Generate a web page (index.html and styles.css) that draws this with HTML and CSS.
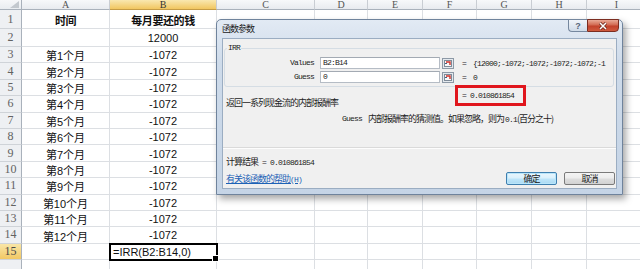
FILE: index.html
```html
<!DOCTYPE html>
<html lang="zh-CN">
<head>
<meta charset="utf-8">
<title>IRR</title>
<link rel="stylesheet" href="styles.css">
</head>
<body>
<div class="sheet">
  <div class="corner"><svg width="9" height="7" viewBox="0 0 9 7"><path d="M9 0V7H0Z" fill="#c3c8ce"/></svg></div>
  <div class="ch">A</div><div class="ch sel">B</div><div class="ch">C</div><div class="ch">D</div><div class="ch">E</div><div class="ch">F</div><div class="ch">G</div><div class="ch">H</div><div class="ch">I</div>

  <div class="rh">1</div><div class="c b">时间</div><div class="c b">每月要还的钱</div><div class="c"></div><div class="c"></div><div class="c"></div><div class="c"></div><div class="c"></div><div class="c"></div><div class="c"></div>
  <div class="rh">2</div><div class="c"></div><div class="c">12000</div><div class="c"></div><div class="c"></div><div class="c"></div><div class="c"></div><div class="c"></div><div class="c"></div><div class="c"></div>
  <div class="rh">3</div><div class="c">第1个月</div><div class="c">-1072</div><div class="c"></div><div class="c"></div><div class="c"></div><div class="c"></div><div class="c"></div><div class="c"></div><div class="c"></div>
  <div class="rh">4</div><div class="c">第2个月</div><div class="c">-1072</div><div class="c"></div><div class="c"></div><div class="c"></div><div class="c"></div><div class="c"></div><div class="c"></div><div class="c"></div>
  <div class="rh">5</div><div class="c">第3个月</div><div class="c">-1072</div><div class="c"></div><div class="c"></div><div class="c"></div><div class="c"></div><div class="c"></div><div class="c"></div><div class="c"></div>
  <div class="rh">6</div><div class="c">第4个月</div><div class="c">-1072</div><div class="c"></div><div class="c"></div><div class="c"></div><div class="c"></div><div class="c"></div><div class="c"></div><div class="c"></div>
  <div class="rh">7</div><div class="c">第5个月</div><div class="c">-1072</div><div class="c"></div><div class="c"></div><div class="c"></div><div class="c"></div><div class="c"></div><div class="c"></div><div class="c"></div>
  <div class="rh">8</div><div class="c">第6个月</div><div class="c">-1072</div><div class="c"></div><div class="c"></div><div class="c"></div><div class="c"></div><div class="c"></div><div class="c"></div><div class="c"></div>
  <div class="rh">9</div><div class="c">第7个月</div><div class="c">-1072</div><div class="c"></div><div class="c"></div><div class="c"></div><div class="c"></div><div class="c"></div><div class="c"></div><div class="c"></div>
  <div class="rh">10</div><div class="c">第8个月</div><div class="c">-1072</div><div class="c"></div><div class="c"></div><div class="c"></div><div class="c"></div><div class="c"></div><div class="c"></div><div class="c"></div>
  <div class="rh">11</div><div class="c">第9个月</div><div class="c">-1072</div><div class="c"></div><div class="c"></div><div class="c"></div><div class="c"></div><div class="c"></div><div class="c"></div><div class="c"></div>
  <div class="rh">12</div><div class="c">第10个月</div><div class="c">-1072</div><div class="c"></div><div class="c"></div><div class="c"></div><div class="c"></div><div class="c"></div><div class="c"></div><div class="c"></div>
  <div class="rh">13</div><div class="c">第11个月</div><div class="c">-1072</div><div class="c"></div><div class="c"></div><div class="c"></div><div class="c"></div><div class="c"></div><div class="c"></div><div class="c"></div>
  <div class="rh">14</div><div class="c">第12个月</div><div class="c">-1072</div><div class="c"></div><div class="c"></div><div class="c"></div><div class="c"></div><div class="c"></div><div class="c"></div><div class="c"></div>
  <div class="rh sel">15</div><div class="c"></div><div class="c active">=IRR(B2:B14,0)</div><div class="c"></div><div class="c"></div><div class="c"></div><div class="c"></div><div class="c"></div><div class="c"></div><div class="c"></div>
  <div class="rh"></div><div class="c"></div><div class="c"></div><div class="c"></div><div class="c"></div><div class="c"></div><div class="c"></div><div class="c"></div><div class="c"></div><div class="c"></div>
</div>

<div class="dlg">
  <div class="titlebar">
    <span class="title cjk">函数参数</span>
    <div class="caps">
      <div class="cap help">?</div>
      <div class="cap close"><svg width="10" height="8" viewBox="0 0 10 8"><path d="M2 1l6 6M8 1L2 7" stroke="#6a2418" stroke-width="3"/><path d="M2 1l6 6M8 1L2 7" stroke="#fff" stroke-width="1.5"/></svg></div>
    </div>
  </div>
  <div class="client">
    <div class="group">
      <div class="legend mono">IRR</div>
      <div class="arg">
        <span class="lbl mono">Values</span>
        <div class="inp mono">B2:B14</div>
        <span class="ref"><svg width="12" height="11" viewBox="0 0 12 11"><rect x="0.5" y="0.5" width="11" height="10" fill="#e4e9ee" stroke="#8d99a6"/><rect x="2.5" y="2.5" width="7" height="6" fill="#f8f8f8" stroke="#7f8b98"/><path d="M4 4h4v3" fill="none" stroke="#d2322a" stroke-width="1.4"/><path d="M3 5.5h2" stroke="#44607e"/></svg></span>
        <span class="eq mono">=</span>
        <span class="val mono">{12000;-1072;-1072;-1072;-1072;-1</span>
      </div>
      <div class="arg">
        <span class="lbl mono">Guess</span>
        <div class="inp mono">0</div>
        <span class="ref"><svg width="12" height="11" viewBox="0 0 12 11"><rect x="0.5" y="0.5" width="11" height="10" fill="#e4e9ee" stroke="#8d99a6"/><rect x="2.5" y="2.5" width="7" height="6" fill="#f8f8f8" stroke="#7f8b98"/><path d="M4 4h4v3" fill="none" stroke="#d2322a" stroke-width="1.4"/><path d="M3 5.5h2" stroke="#44607e"/></svg></span>
        <span class="eq mono">=</span>
        <span class="val mono">0</span>
      </div>
    </div>
    <div class="result"><span class="mark mono">= 0.010861854</span></div>
    <div class="desc cjk">返回一系列现金流的内部报酬率</div>
    <div class="argdesc"><span class="an mono">Guess</span><span class="cjk">内部报酬率的猜测值。如果忽略，则为 <span class="mono">0.1</span>(百分之十)</span></div>
    <div class="sep"></div>
    <div class="calc"><span class="cjk">计算结果</span><span class="mono"> = 0.010861854</span></div>
    <div class="footer">
      <a class="link" href="#"><span class="cjk">有关该函数的帮助</span><span class="mono">(H)</span></a>
      <div class="btns">
        <button class="btn def cjk">确定</button>
        <button class="btn cjk">取消</button>
      </div>
    </div>
  </div>
</div>
</body>
</html>
```

FILE: styles.css
```css
* { box-sizing: border-box; }
html, body { margin: 0; padding: 0; }
body {
  width: 640px;
  height: 269px;
  overflow: hidden;
  position: relative;
  background: #fff;
  font-family: "Liberation Sans", "Noto Sans CJK SC", sans-serif;
  color: #111;
}

/* ---------- spreadsheet ---------- */
.sheet {
  display: grid;
  grid-template-columns: 22px 88px 107px 98px 53px 55px 54px 55px 55px 60px;
  grid-template-rows: 10px 19px 18px repeat(13, 16.4px) 20px;
}
.corner {
  background: linear-gradient(#f6f7f9, #e9ecf0);
  border-right: 1px solid #a9b1bb;
  border-bottom: 1px solid #a9b1bb;
  display: flex;
  align-items: flex-end;
  justify-content: flex-end;
  padding: 0 2px 1px 0;
}
.ch {
  background: linear-gradient(#f7f8fa, #e8ebef);
  border-right: 1px solid #c9cdd3;
  border-bottom: 1px solid #a9b1bb;
  font-family: "Liberation Serif", serif;
  font-size: 10px;
  line-height: 10px;
  color: #555;
  display: flex;
  align-items: center;
  justify-content: center;
  overflow: hidden;
}
.ch.sel {
  background: linear-gradient(#f9e8b0, #f1c660);
  border-bottom-color: #c59c45;
  color: #333;
}
.rh {
  background: #eef0f3;
  border-right: 1px solid #a9b1bb;
  border-bottom: 1px solid #cfd3d8;
  font-family: "Liberation Serif", serif;
  font-size: 12px;
  color: #626262;
  display: flex;
  align-items: center;
  justify-content: center;
  overflow: hidden;
}
.rh.sel {
  background: linear-gradient(#f9e6a8, #f2c864);
  color: #4a4a4a;
}
.c {
  border-right: 1px solid #dcdfe3;
  border-bottom: 1px solid #dcdfe3;
  font-size: 11px;
  display: flex;
  align-items: center;
  justify-content: center;
  white-space: nowrap;
  overflow: hidden;
  padding-top: 1px;
}
.c.b { font-weight: bold; letter-spacing: -0.4px; }
.c.active {
  justify-content: flex-start;
  padding-left: 3px;
  overflow: visible;
  position: relative;
  outline: 2px solid #000;
  outline-offset: -1px;
}
.c.active::after {
  content: "";
  position: absolute;
  right: -3px;
  bottom: -3px;
  width: 5px;
  height: 5px;
  background: #000;
  border: 1px solid #fff;
}

/* ---------- dialog ---------- */
.cjk {
  font-family: "Noto Sans CJK SC", sans-serif;
  font-size: 9px;
  letter-spacing: -1px;
}
.mono {
  font-family: "Liberation Mono", monospace;
  font-size: 8px;
  letter-spacing: -0.8px;
}
.dlg {
  position: absolute;
  left: 216px;
  top: 19px;
  width: 407px;
  height: 176px;
  border: 1px solid #6f839c;
  border-radius: 5px 5px 0 0;
  background: linear-gradient(#e2eaf4, #cedbea 25%, #c5d4e6);
  padding: 0 5px 5px;
  box-shadow: 3px 4px 7px rgba(0, 0, 0, 0.35);
  display: flex;
  flex-direction: column;
  color: #1c1c1c;
}
.titlebar {
  height: 18px;
  display: flex;
  align-items: flex-start;
}
.title {
  line-height: 18px;
  color: #1a1a1a;
}
.caps {
  margin-left: auto;
  margin-top: -1px;
  margin-right: -2px;
  display: flex;
}
.cap {
  height: 13px;
  display: flex;
  align-items: center;
  justify-content: center;
}
.cap.help {
  width: 19px;
  border: 1px solid #75879e;
  border-right: none;
  border-radius: 0 0 0 4px;
  background: linear-gradient(#f1f5fa, #d0dbe8);
  font-family: "Liberation Sans", sans-serif;
  font-weight: bold;
  font-size: 9px;
  color: #55657a;
}
.cap.close {
  width: 32px;
  border: 1px solid #7b2d20;
  border-radius: 0 0 4px 0;
  background: linear-gradient(#e9a996, #d26a52 45%, #c2412b 55%, #cf5a3e);
}
.client {
  flex: 1;
  background: #f0f0f0;
  border: 1px solid #9badc2;
  padding: 0 2px 0 3px;
  display: flex;
  flex-direction: column;
}
.group {
  margin: 9px 0 0 -2px;
  border: 1px solid #d5dde4;
  border-radius: 3px;
  padding: 0 0 3px 0;
}
.legend {
  width: fit-content;
  margin: -6px 0 0 2px;
  padding: 0 1px;
  background: #f0f0f0;
  line-height: 10px;
  height: 10px;
}
.arg {
  display: flex;
  align-items: center;
  height: 12px;
  margin-top: 4px;
}
.arg + .arg { margin-top: 2px; }
.lbl {
  width: 89px;
  text-align: right;
  line-height: 12px;
}
.inp {
  width: 120px;
  height: 12px;
  margin-left: 6px;
  background: #fff;
  border: 1px solid #b5bcc5;
  border-top-color: #a3aab3;
  padding-left: 2px;
  line-height: 10px;
}
.ref {
  display: flex;
  margin-left: 2px;
}
.eq { margin-left: 8px; width: 5px; }
.val {
  margin-left: 6px;
  flex: 1;
  white-space: nowrap;
}
.result {
  height: 10px;
  line-height: 10px;
  margin-top: 1px;
  padding-left: 236px;
}
.mark {
  position: relative;
  white-space: nowrap;
}
.mark::after {
  content: "";
  position: absolute;
  left: -7px;
  right: -12px;
  top: -6px;
  bottom: -6px;
  border: 3px solid #e0161d;
}
.desc {
  line-height: 10px;
  height: 10px;
}
.argdesc {
  margin-top: 6px;
  height: 10px;
  line-height: 10px;
  padding-left: 116px;
  display: flex;
  white-space: nowrap;
}
.an { width: 26px; }
.argdesc .mono { letter-spacing: -0.8px; }
.sep {
  margin: 23px -2px 0 -3px;
  border-top: 1px solid #dadada;
  border-bottom: 1px solid #fdfdfd;
}
.calc {
  margin-top: 6px;
  height: 10px;
  line-height: 10px;
  white-space: nowrap;
}
.footer {
  margin-top: 7px;
  height: 13px;
  display: flex;
  align-items: center;
}
.link {
  color: #1d62b6;
  text-decoration: underline;
  line-height: 10px;
  white-space: nowrap;
}
.btns {
  margin-left: auto;
  margin-right: -1px;
  display: flex;
  gap: 7px;
}
.btn {
  width: 51px;
  height: 13px;
  padding: 0;
  border: 1px solid #7a7a7a;
  border-radius: 2px;
  background: linear-gradient(#f4f4f4, #ececec 48%, #dedede 52%, #d2d2d2);
  color: #1a1a1a;
  line-height: 11px;
  text-align: center;
}
.btn.def {
  border-color: #3f7faf;
  background: linear-gradient(#eaf6fd, #d9f0fc 48%, #bfe6fa 52%, #aad9f2);
  box-shadow: inset 0 0 0 1px #b9e6fb;
}
```
